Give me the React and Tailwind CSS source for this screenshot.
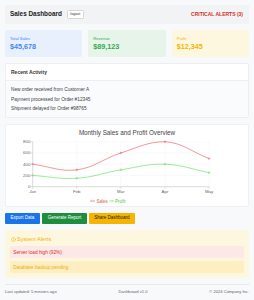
import React from 'react';
import { CircleAlert } from 'lucide-react';

const font = { fontFamily: '"Liberation Sans", Arial, sans-serif' };

// chart geometry, in page pixels (the svg viewBox maps 1:1)
const X = [31.7, 75.8, 119.9, 164, 208.1];
const TOP = 141.7;
const BOTTOM = 186.7;
const yOf = v => BOTTOM - (v * (BOTTOM - TOP)) / 800;
const months = ['Jan', 'Feb', 'Mar', 'Apr', 'May'];
const sales = [400, 300, 600, 800, 500];
const profit = [200, 150, 300, 400, 250];

function spline(values, t = 0.4) {
  const pts = values.map((v, i) => ({ x: X[i], y: yOf(v) }));
  const clampY = y => Math.min(BOTTOM, Math.max(TOP, y));
  const ctrl = pts.map((cur, i) => {
    const prev = pts[i - 1] || cur;
    const next = pts[i + 1] || cur;
    const d01 = Math.hypot(cur.x - prev.x, cur.y - prev.y);
    const d12 = Math.hypot(next.x - cur.x, next.y - cur.y);
    const s01 = d01 / (d01 + d12) || 0;
    const s12 = d12 / (d01 + d12) || 0;
    return {
      in: { x: cur.x - t * s01 * (next.x - prev.x), y: clampY(cur.y - t * s01 * (next.y - prev.y)) },
      out: { x: cur.x + t * s12 * (next.x - prev.x), y: clampY(cur.y + t * s12 * (next.y - prev.y)) },
    };
  });
  let d = `M${pts[0].x} ${pts[0].y}`;
  for (let i = 1; i < pts.length; i++) {
    const a = ctrl[i - 1].out, b = ctrl[i].in;
    d += ` C${a.x} ${a.y} ${b.x} ${b.y} ${pts[i].x} ${pts[i].y}`;
  }
  return { d, pts };
}

const salesLine = spline(sales);
const profitLine = spline(profit);

const RED = 'rgba(228,70,70,0.62)';
const GREEN = 'rgba(70,215,70,0.6)';

function Chart() {
  return (
    <svg width="244" height="69" viewBox="5 137 244 69" className="block" style={font}>
      {[0, 200, 400, 600, 800].map(v => (
        <g key={v}>
          <line x1={X[0]} x2={X[4]} y1={yOf(v)} y2={yOf(v)} stroke="#e6e6e6" strokeWidth="0.5" strokeDasharray="1 1" />
          <line x1={X[0] - 2} x2={X[0]} y1={yOf(v)} y2={yOf(v)} stroke="#bbb" strokeWidth="0.5" />
          <text x="29.4" y={yOf(v) + 1.5} fontSize="4.4" fill="#666" textAnchor="end">{v}</text>
        </g>
      ))}
      {months.map((m, i) => (
        <g key={m}>
          <line x1={X[i]} x2={X[i]} y1={TOP} y2={BOTTOM} stroke="#e6e6e6" strokeWidth="0.5" strokeDasharray="1 1" />
          <line x1={X[i]} x2={X[i]} y1={BOTTOM} y2={BOTTOM + 2} stroke="#bbb" strokeWidth="0.5" />
          <text x={X[i]} y="193.3" fontSize="4.4" fill="#666" textAnchor="middle">{m}</text>
        </g>
      ))}
      <line x1={X[0]} x2={X[0]} y1={TOP} y2={BOTTOM} stroke="#c8c8c8" strokeWidth="0.6" />
      <line x1={X[0]} x2={X[4]} y1={BOTTOM} y2={BOTTOM} stroke="#c8c8c8" strokeWidth="0.6" />

      <path d={salesLine.d} fill="none" stroke={RED} strokeWidth="0.9" />
      <path d={profitLine.d} fill="none" stroke={GREEN} strokeWidth="0.9" />
      {salesLine.pts.map((p, i) => (
        <circle key={'s' + i} cx={p.x} cy={p.y} r="0.9" fill="rgba(228,70,70,0.15)" stroke={RED} strokeWidth="0.5" />
      ))}
      {profitLine.pts.map((p, i) => (
        <circle key={'p' + i} cx={p.x} cy={p.y} r="0.9" fill="rgba(70,215,70,0.15)" stroke={GREEN} strokeWidth="0.5" />
      ))}

      <line x1="89" x2="94" y1="201" y2="201" stroke={RED} strokeWidth="0.8" />
      <circle cx="91.5" cy="201" r="0.9" fill="white" stroke={RED} strokeWidth="0.5" />
      <text x="95.5" y="202.6" fontSize="4.5" fill="#e25555">Sales</text>
      <line x1="108.5" x2="113" y1="201" y2="201" stroke={GREEN} strokeWidth="0.8" />
      <circle cx="110.8" cy="201" r="0.9" fill="white" stroke={GREEN} strokeWidth="0.5" />
      <text x="114" y="202.6" fontSize="4.5" fill="#45c945">Profit</text>
    </svg>
  );
}

const stats = [
  { label: 'Total Sales', value: '$45,678', box: 'bg-[#e8f0fe]', text: 'text-[#4285f4]' },
  { label: 'Revenue', value: '$89,123', box: 'bg-[#e6f4ea]', text: 'text-[#34a853]' },
  { label: 'Profit', value: '$12,345', box: 'bg-[#fef7e0]', text: 'text-[#f4b400]' },
];

const activity = [
  'New order received from Customer A',
  'Payment processed for Order #12345',
  'Shipment delayed for Order #98765',
];

export default function App() {
  return (
    <div className="w-[254px] h-[300px] overflow-hidden bg-[#f8f9fb] px-[5px] pt-[5px] text-[#3c4043]" style={font}>
      <div className="h-[19px] bg-[#f1f3f4] rounded-[2px] flex items-center px-[5px]">
        <span className="text-[6.4px] font-bold text-[#202124] leading-none">Sales Dashboard</span>
        <span className="ml-[5px] h-[9px] px-[2.5px] flex items-center bg-white border border-[#d5d7da] rounded-[1.5px] text-[3.6px] text-[#333] leading-none">
          logout
        </span>
        <span className="ml-auto mr-[1px] text-[5px] font-bold text-[#d93025] leading-none">CRITICAL ALERTS (3)</span>
      </div>

      <div className="grid grid-cols-3 gap-[6px] mt-[6px]">
        {stats.map(s => (
          <div key={s.label} className={`h-[27px] rounded-[2px] pl-[5px] pt-[5.5px] ${s.box}`}>
            <div className={`text-[4.1px] leading-[5px] ${s.text}`}>{s.label}</div>
            <div className={`mt-[2.5px] text-[7.2px] leading-[8px] font-bold ${s.text}`}>{s.value}</div>
          </div>
        ))}
      </div>

      <div className="mt-[6px] bg-white border border-[#eceef1] rounded-[2px]">
        <div className="pl-[5px] pt-[5px] pb-[5px] text-[5px] leading-[6px] font-bold text-[#333]">Recent Activity</div>
        <ul className="bg-[#fafbfc] border-t border-[#eceef1] pl-[5px] pt-[4.25px] pb-[3.25px] text-[4.75px] text-[#3c4043]">
          {activity.map(a => (
            <li key={a} className="leading-[9.5px]">{a}</li>
          ))}
        </ul>
      </div>

      <div className="mt-[6px] bg-white border border-[#eef0f3] rounded-[2px] overflow-hidden">
        <div className="h-[12px] pt-[4px] text-center text-[6.3px] leading-[8px] text-[#444]">
          Monthly Sales and Profit Overview
        </div>
        <Chart />
      </div>

      <div className="mt-[5.7px] flex gap-[2.5px]">
        <button className="h-[11.6px] px-[5.5px] rounded-[1px] bg-[#1a73e8] text-white text-[4.5px] leading-none">Export Data</button>
        <button className="h-[11.6px] px-[5.5px] rounded-[1px] bg-[#1e8e3e] text-white text-[4.5px] leading-none">Generate Report</button>
        <button className="h-[11.6px] px-[5px] rounded-[1px] bg-[#f4b400] text-[#202124] text-[4.5px] leading-none">Share Dashboard</button>
      </div>

      <div className="mt-[5.7px] bg-[#fef7e0] rounded-[2px] px-[5px] pt-[5px] pb-[4.7px]">
        <div className="flex items-center gap-[1px] h-[9.5px] text-[5.6px] text-[#f4b400]">
          <CircleAlert size={5} strokeWidth={2.2} className="shrink-0 ml-[1px]" />
          <span className="leading-none">System Alerts</span>
        </div>
        <div className="mt-[1.5px] h-[12.3px] flex items-center pl-[3.3px] bg-[#fce8e6] rounded-[1px] text-[4.75px] text-[#d93025]">
          Server load high (92%)
        </div>
        <div className="mt-[2.7px] h-[12.3px] flex items-center pl-[3.3px] bg-[#feefc3] rounded-[1px] text-[4.75px] text-[#f2a900]">
          Database backup pending
        </div>
      </div>

      <div className="mt-[6px] border-t border-[#e8eaed] h-[16px] flex items-center justify-between text-[4.1px] text-[#5f6368]">
        <span>Last updated: 5 minutes ago</span>
        <span>Dashboard v1.0</span>
        <span>© 2024 Company Inc.</span>
      </div>
    </div>
  );
}
